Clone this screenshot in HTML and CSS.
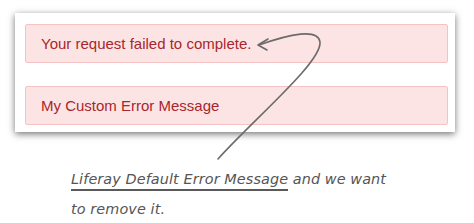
FILE: index.html
```html
<!DOCTYPE html>
<html lang="en">
<head>
    <meta charset="UTF-8">
    <title>Liferay Error Message</title>
    <link rel="stylesheet" href="styles.css">
</head>
<body>

    <div class="shot">
        <!-- Screenshot card -->
        <div class="card">
            <div class="alert">Your request failed to complete.</div>
            <div class="alert">My Custom Error Message</div>
        </div>

        <!-- Hand drawn note -->
        <p class="note">
            <span class="mark">Liferay Default Error Message</span> and we want<br>
            to remove it.
        </p>

        <svg class="arrow" width="474" height="223" viewBox="0 0 474 223">
            <path d="M218 159 C 255 118, 322 62, 320 42 C 318 28, 290 34, 259 45" fill="none" stroke="#6b6b6b" stroke-width="1.6" stroke-linecap="round"/>
            <path d="M268 39 L258 45 L267 50" fill="none" stroke="#6b6b6b" stroke-width="1.6" stroke-linecap="round" stroke-linejoin="round"/>
        </svg>
    </div>

</body>
</html>
```

FILE: styles.css
```css
body {
    margin: 0;
    background-color: #fff;
    font-family: "Liberation Sans", Arial, sans-serif;
}
.shot {
    position: relative;
    width: 474px;
    height: 223px;
    padding-top: 13px;
    box-sizing: border-box;
}
.card {
    width: 440px;
    margin-left: 15px;
    padding: 11px 7px 7px 10px;
    box-sizing: border-box;
    background-color: #fff;
    box-shadow: 0 2px 7px rgba(0, 0, 0, 0.55);
    display: flex;
    flex-direction: column;
    gap: 23px;
}
.alert {
    height: 39px;
    box-sizing: border-box;
    padding: 0 15px;
    display: flex;
    align-items: center;
    background-color: #fde4e4;
    border: 1px solid #f4c3c3;
    border-radius: 2px;
    color: #a8262c;
    font-size: 15px;
}
.note {
    margin: 32px 0 0 71px;
    font-family: "DejaVu Sans", sans-serif;
    font-style: oblique;
    font-size: 14.4px;
    line-height: 30px;
    color: #555;
    letter-spacing: 0.1px;
}
.mark {
    padding-bottom: 2px;
    border-bottom: 2px solid #5a5a5a;
}
.arrow {
    position: absolute;
    left: 0;
    top: 0;
    pointer-events: none;
}
```
